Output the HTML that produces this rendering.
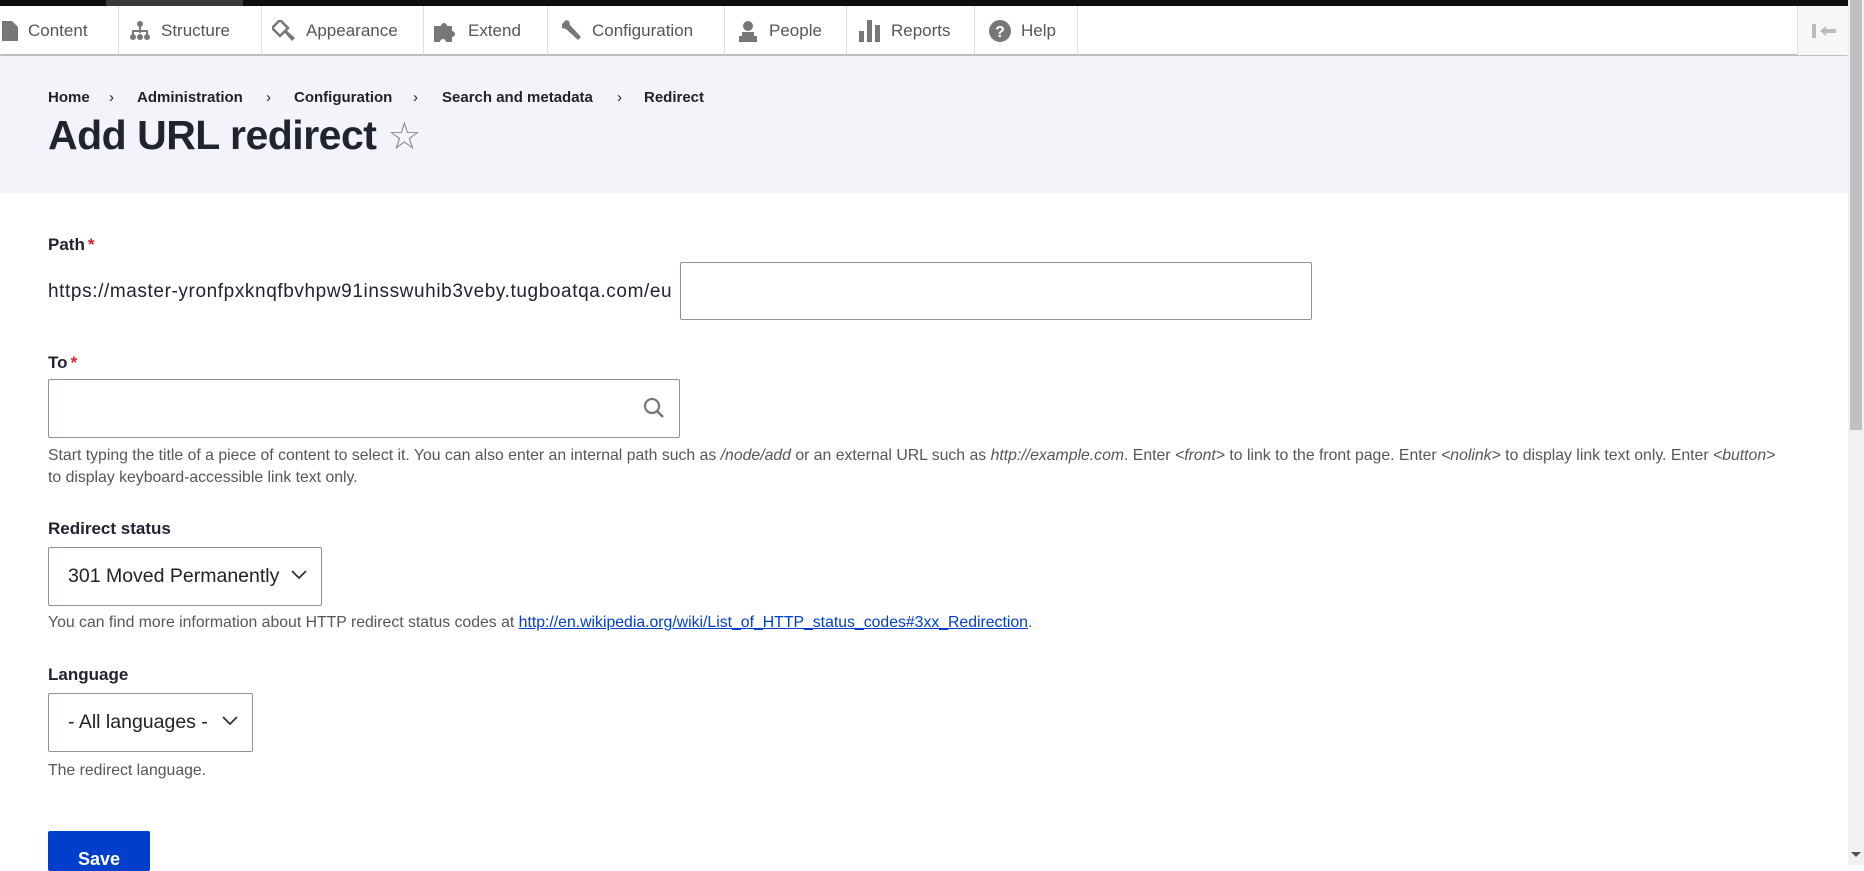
<!DOCTYPE html>
<html><head><meta charset="utf-8"><style>
*{box-sizing:border-box;margin:0;padding:0}
body{width:1864px;height:865px;overflow:hidden;background:#fff;font-family:"Liberation Sans",sans-serif;color:#222330;position:relative}
.a{position:absolute;white-space:nowrap}
#blk{left:0;top:0;width:1848px;height:6px;background:#0f0f0f}
#tab{left:106px;top:0;width:137px;height:6px;background:#3a3a3a}
#tb{left:0;top:6px;width:1848px;height:49px;background:#fff;border-bottom:1px solid #bbb;box-shadow:0 2px 3px rgba(0,0,0,.3)}
.ti{position:absolute;top:0;height:49px;border-right:1px solid #ddd;display:flex;align-items:center;font-size:17px;color:#555;padding-left:8px}
.ti svg{margin-right:10px;fill:#777}
#hd{left:0;top:56px;width:1848px;height:137px;background:#f3f4f9}
.bc{font-size:15px;font-weight:bold;top:89px;color:#222}
h1{position:absolute;left:48px;top:112px;font-size:41px;font-weight:bold;letter-spacing:-0.5px;color:#222330;white-space:nowrap}
.lb{font-size:17px;font-weight:bold}
.req{color:#dc2323;margin-left:3px}
.in{position:absolute;border:1px solid #8e929c;border-radius:2px;background:#fff}
.hp{font-size:15.8px;color:#55565b}
#sb{left:1848px;top:0;width:16px;height:865px;background:#f1f1f1}
#th{left:1850px;top:0;width:12px;height:430px;background:#c1c1c1}
.sel{font-size:19.5px;color:#222;display:flex;align-items:center;padding-left:19px}
.chev{position:absolute;right:14px;top:22px}
</style></head><body>
<div class="a" id="blk"></div><div class="a" id="tab"></div>
<div class="a" id="tb">
 <div class="ti" style="left:0;width:119px;padding-left:2px"><svg width="16" height="20" viewBox="0 0 16 20"><path d="M0 0h10l6 6v14H0z"/></svg>Content</div>
 <div class="ti" style="left:119px;width:143px;padding-left:10px"><svg width="22" height="20" viewBox="0 0 22 20"><circle cx="11" cy="3" r="3"/><rect x="10" y="4" width="2" height="8"/><rect x="3" y="9" width="16" height="2"/><rect x="3" y="9" width="2" height="6"/><rect x="17" y="9" width="2" height="6"/><circle cx="4" cy="16" r="3"/><circle cx="11" cy="16" r="3"/><circle cx="18" cy="16" r="3"/></svg>Structure</div>
 <div class="ti" style="left:262px;width:162px;padding-left:10px"><svg width="24" height="22" viewBox="0 0 24 22"><path d="M8 0L0 8l8 8 8-8z" fill="none" stroke="#777" stroke-width="2.5"/><path d="M12 12l8 9 3-3-9-8z"/></svg>Appearance</div>
 <div class="ti" style="left:424px;width:124px;padding-left:10px"><svg width="24" height="22" viewBox="0 0 24 22"><path d="M0 6h7a3 3 0 1 1 6 0h5v5a3 3 0 1 1 0 6v5h-6a3 3 0 1 0-6 0H0z"/></svg>Extend</div>
 <div class="ti" style="left:548px;width:177px;padding-left:12px"><svg width="22" height="22" viewBox="0 0 22 22"><path d="M2 4l4-4 3 1 1 4 11 12-3 3L6 9 2 8z"/></svg>Configuration</div>
 <div class="ti" style="left:725px;width:122px;padding-left:12px"><svg width="22" height="22" viewBox="0 0 22 22"><circle cx="11" cy="6" r="5"/><path d="M5 12h12v4h3v6H2v-6h3z"/></svg>People</div>
 <div class="ti" style="left:847px;width:128px;padding-left:12px"><svg width="22" height="22" viewBox="0 0 22 22"><rect x="0" y="11" width="5" height="11"/><rect x="8" y="0" width="5" height="22"/><rect x="16" y="5" width="5" height="17"/></svg>Reports</div>
 <div class="ti" style="left:975px;width:103px;padding-left:14px"><svg width="22" height="22" viewBox="0 0 22 22"><circle cx="11" cy="11" r="11"/><text x="11" y="17" font-size="16" font-weight="bold" fill="#fff" text-anchor="middle" font-family="Liberation Sans">?</text></svg>Help</div>
 <div class="ti" style="left:1797px;width:51px;border-left:1px solid #ddd;border-right:none;padding-left:14px;background:#f7f7f7"><svg width="24" height="14" viewBox="0 0 24 14"><rect x="0" y="0" width="4" height="14" fill="#bbb"/><path d="M8 7l6-5v3h10v4H14v3z" fill="#bbb"/></svg></div>
</div>
<div class="a" id="hd"></div>
<div class="a bc" style="left:48px">Home</div>
<div class="a bc" style="left:109px;font-weight:normal">›</div>
<div class="a bc" style="left:137px">Administration</div>
<div class="a bc" style="left:266px;font-weight:normal">›</div>
<div class="a bc" style="left:294px">Configuration</div>
<div class="a bc" style="left:413px;font-weight:normal">›</div>
<div class="a bc" style="left:442px">Search and metadata</div>
<div class="a bc" style="left:617px;font-weight:normal">›</div>
<div class="a bc" style="left:644px">Redirect</div>
<h1>Add URL redirect <span style="color:#888;font-weight:normal;font-size:38px">☆</span></h1>

<div class="a lb" style="left:48px;top:235px">Path<span class="req">*</span></div>
<div class="a" style="left:48px;top:281px;font-size:19px;letter-spacing:0.6px">https://master-yronfpxknqfbvhpw91insswuhib3veby.tugboatqa.com/eu</div>
<div class="in" style="left:680px;top:262px;width:632px;height:58px"></div>

<div class="a lb" style="left:48px;top:353px">To<span class="req">*</span></div>
<div class="in" style="left:48px;top:379px;width:632px;height:59px"><svg style="position:absolute;right:14px;top:17px" width="22" height="22" viewBox="0 0 22 22"><circle cx="9" cy="9" r="7" fill="none" stroke="#777" stroke-width="2.2"/><path d="M14 14l6 6" stroke="#777" stroke-width="2.5"/></svg></div>
<div class="a hp" style="left:48px;top:447px">Start typing the title of a piece of content to select it. You can also enter an internal path such as <i>/node/add</i> or an external URL such as <i>http://example.com</i>. Enter <i>&lt;front&gt;</i> to link to the front page. Enter <i>&lt;nolink&gt;</i> to display link text only. Enter <i>&lt;button&gt;</i></div>
<div class="a hp" style="left:48px;top:469px">to display keyboard-accessible link text only.</div>

<div class="a lb" style="left:48px;top:519px">Redirect status</div>
<div class="in sel" style="left:48px;top:547px;width:274px;height:59px">301 Moved Permanently<svg class="chev" width="16" height="10" viewBox="0 0 16 10"><path d="M1 1l7 7 7-7" fill="none" stroke="#333" stroke-width="1.8"/></svg></div>
<div class="a hp" style="left:48px;top:614px">You can find more information about HTTP redirect status codes at <span style="color:#003ecc;text-decoration:underline">http://en.wikipedia.org/wiki/List_of_HTTP_status_codes#3xx_Redirection</span>.</div>

<div class="a lb" style="left:48px;top:665px">Language</div>
<div class="in sel" style="left:48px;top:693px;width:205px;height:59px">- All languages -<svg class="chev" width="16" height="10" viewBox="0 0 16 10"><path d="M1 1l7 7 7-7" fill="none" stroke="#333" stroke-width="1.8"/></svg></div>
<div class="a hp" style="left:48px;top:762px">The redirect language.</div>

<div class="a" style="left:48px;top:831px;width:102px;height:40px;background:#003ecc;border-radius:2px;color:#fff;font-weight:bold;font-size:18px;text-align:center;padding-top:18px">Save</div>

<div class="a" id="sb"></div><div class="a" id="th"></div>
<svg class="a" style="left:1851px;top:852px" width="10" height="6" viewBox="0 0 10 6"><path d="M0 0h10L5 5z" fill="#505050"/></svg>
</body></html>
